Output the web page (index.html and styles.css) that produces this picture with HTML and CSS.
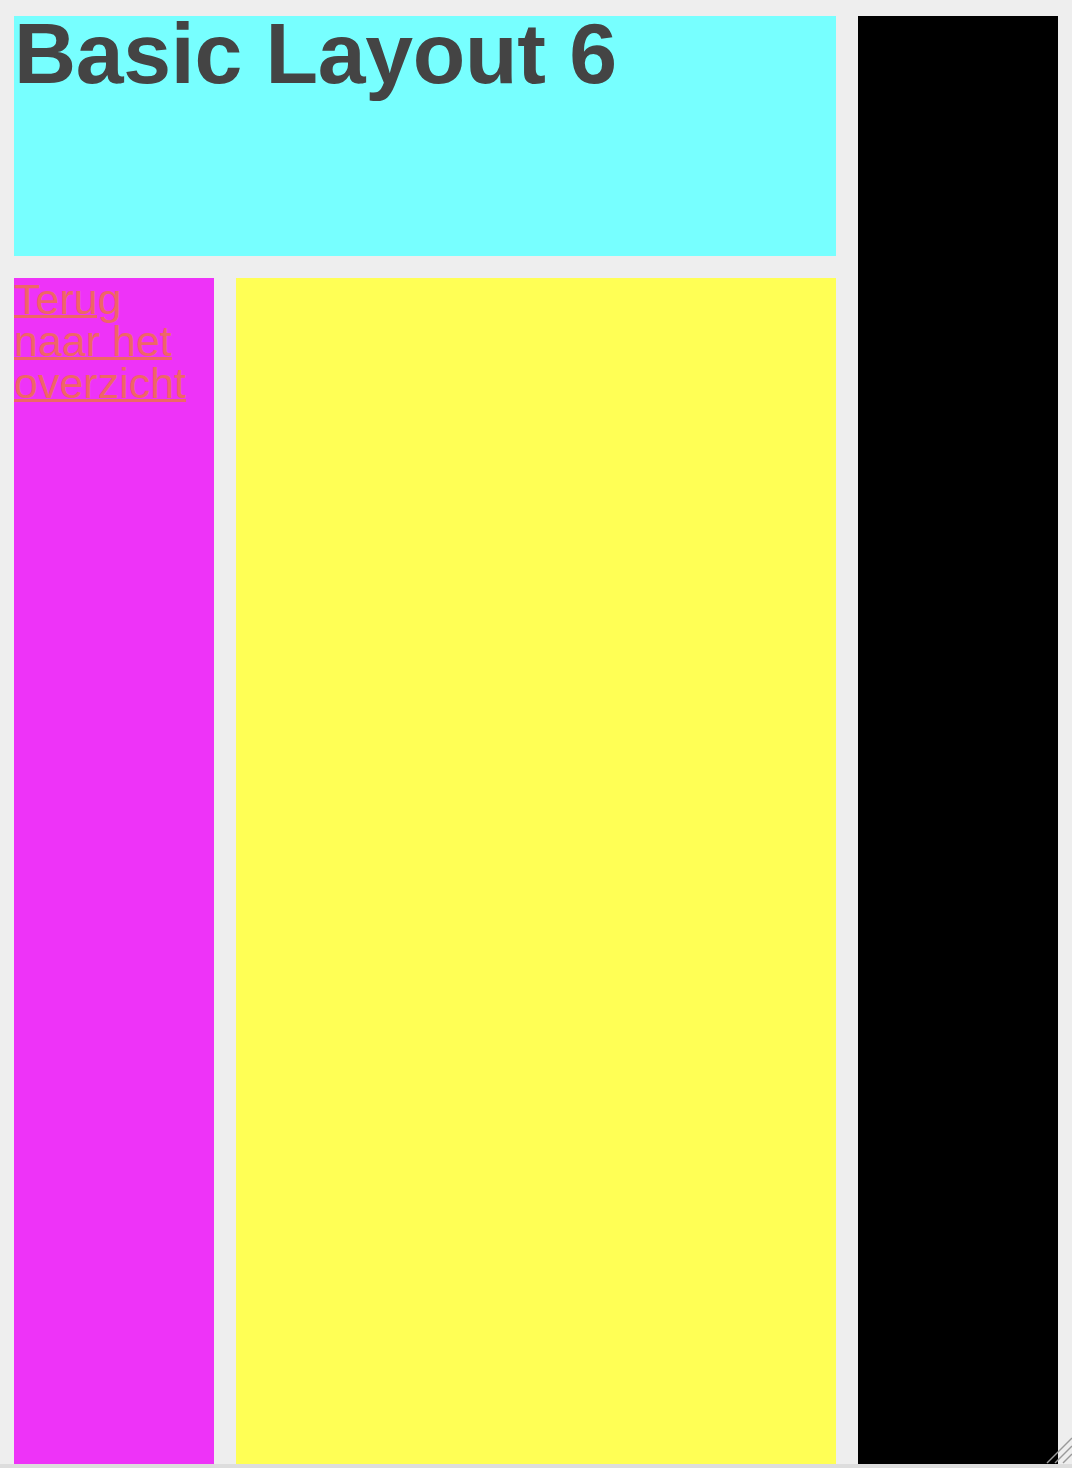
FILE: index.html
```html
<!DOCTYPE html>
<html lang="nl">
<head>
<meta charset="utf-8">
<title>Basic Layout 6</title>
<link rel="stylesheet" href="styles.css">
</head>
<body>
<div class="page">
  <header class="header">
    <h1 class="title">Basic Layout 6</h1>
  </header>
  <nav class="nav">
    <a class="back" href="#">Terug naar het overzicht</a>
  </nav>
  <main class="main"></main>
  <aside class="side"></aside>
</div>
<div class="strip"></div>
<svg class="grip" width="26" height="28" viewBox="0 0 26 28" aria-hidden="true">
  <line x1="1" y1="27" x2="26" y2="2" stroke="#9a9a9a" stroke-width="1.5"/>
  <line x1="9" y1="27" x2="26" y2="10" stroke="#9a9a9a" stroke-width="1.5"/>
  <line x1="17" y1="27" x2="26" y2="18" stroke="#9a9a9a" stroke-width="1.5"/>
</svg>
</body>
</html>
```

FILE: styles.css
```css
html, body {
  margin: 0;
  padding: 0;
}
body {
  background: #eeeeee;
  font-family: "Liberation Sans", Arial, Helvetica, sans-serif;
  height: 1468px;
  overflow: hidden;
  position: relative;
}
.page {
  display: grid;
  grid-template-columns: 200px 600px 200px;
  grid-template-rows: 240px 1186px;
  column-gap: 22px;
  row-gap: 22px;
  padding: 16px 14px 0 14px;
}
.header {
  grid-column: 1 / 3;
  grid-row: 1;
  background: #77ffff;
}
.title {
  margin: 0;
  font-size: 86px;
  line-height: 75px;
  font-weight: bold;
  color: #444444;
  letter-spacing: -0.3px;
}
.nav {
  grid-column: 1;
  grid-row: 2;
  background: #ee33f8;
}
.back {
  display: block;
  font-size: 43px;
  line-height: 42px;
  color: #ee6666;
  text-decoration: underline;
  text-decoration-thickness: 3px;
  text-underline-offset: 1px;
}
.main {
  grid-column: 2;
  grid-row: 2;
  background: #ffff55;
}
.side {
  grid-column: 3;
  grid-row: 1 / 3;
  background: #000000;
}
.strip {
  height: 4px;
  background: #dddddd;
  position: absolute;
  left: 0;
  right: 0;
  bottom: 0;
}
.grip {
  position: absolute;
  right: 0;
  bottom: 4px;
}
```
